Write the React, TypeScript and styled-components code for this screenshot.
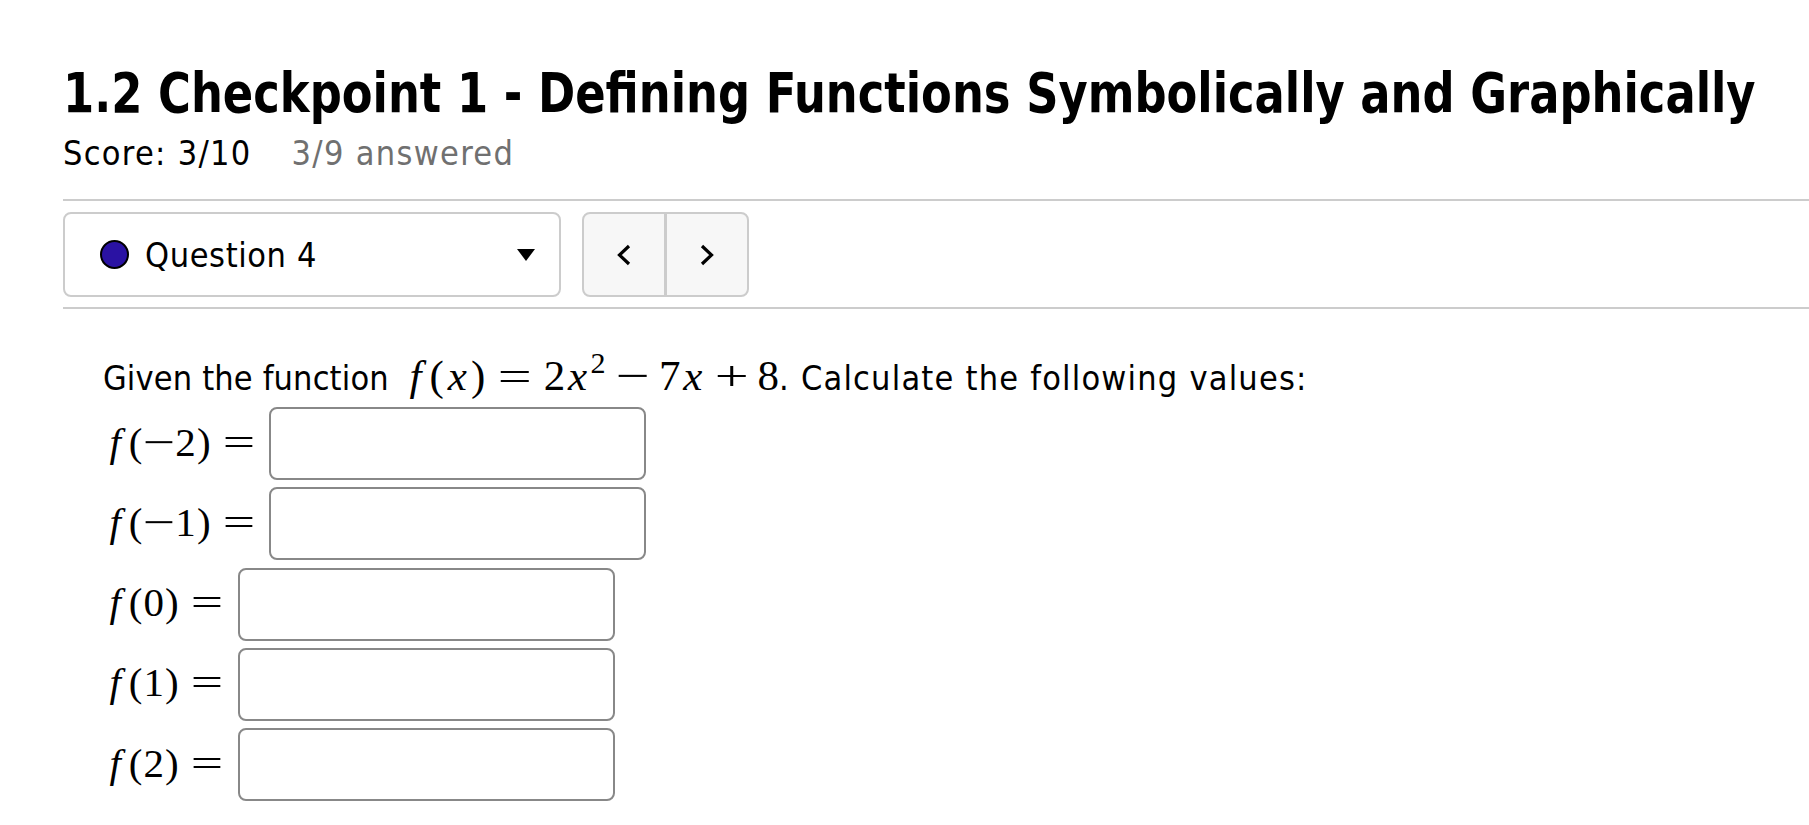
import styled, { createGlobalStyle } from "styled-components";

const GlobalStyle = createGlobalStyle`
  body {
    margin: 0;
    background: #fff;
    color: #000;
    font-family: "DejaVu Sans Condensed", "DejaVu Sans", sans-serif;
    font-stretch: condensed;
  }
`;

const Page = styled.div`
  padding: 61px 0 24px 63px;
  overflow: hidden;
`;

const Title = styled.h1`
  margin: 0;
  font-size: 56px;
  line-height: 64px;
  font-weight: 700;
  white-space: nowrap;
  transform: scaleX(0.89);
  transform-origin: left center;
`;

const ScoreLine = styled.div`
  margin-top: 8px;
  font-size: 34px;
  line-height: 40px;
  letter-spacing: 1.3px;
  white-space: nowrap;
`;

const Answered = styled.span`
  margin-left: 40px;
  color: #707070;
`;

const Divider = styled.hr<{ $top: number }>`
  margin: ${(p) => p.$top}px 0 0;
  height: 0;
  border: 0;
  border-top: 2px solid #ccc;
`;

const Toolbar = styled.div`
  display: flex;
  gap: 21px;
  margin-top: 11px;
  height: 85px;
`;

const QuestionSelect = styled.div`
  width: 498px;
  box-sizing: border-box;
  display: flex;
  align-items: center;
  padding: 0 24px 0 35px;
  border: 2px solid #ccc;
  border-radius: 8px;
  font-size: 34px;
  letter-spacing: 0.6px;
  cursor: pointer;
`;

const StatusDot = styled.span`
  width: 29px;
  height: 29px;
  flex: 0 0 29px;
  box-sizing: border-box;
  border-radius: 50%;
  border: 2.5px solid #000;
  background: #2a12a3;
`;

const QuestionLabel = styled.span`
  flex: 1;
  margin-left: 16px;
`;

const NavGroup = styled.div`
  width: 167px;
  box-sizing: border-box;
  display: flex;
  border: 2px solid #ccc;
  border-radius: 8px;
  background: #f7f7f7;
  overflow: hidden;
`;

const NavButton = styled.button`
  flex: 1;
  display: flex;
  align-items: center;
  justify-content: center;
  padding: 0;
  border: 0;
  background: transparent;
  cursor: pointer;
  & + & {
    border-left: 3px solid #ccc;
  }
`;

const Question = styled.div`
  margin-top: 45px;
  padding-left: 40px;
`;

const Prompt = styled.div`
  font-size: 34px;
  line-height: 48px;
  letter-spacing: 0.15px;
  white-space: nowrap;
`;

const PromptTail = styled.span`
  letter-spacing: 1.2px;
`;

const Answers = styled.div`
  display: flex;
  flex-direction: column;
  gap: 7.25px;
  margin-top: 5px;
`;

const AnswerRow = styled.div`
  display: flex;
  align-items: center;
`;

const AnswerBox = styled.input`
  width: 377px;
  height: 73px;
  box-sizing: border-box;
  margin: 0 0 0 3px;
  border: 2px solid #888;
  border-radius: 8px;
  background: #fff;
  font-size: 34px;
  outline: none;
`;

const MathRun = styled.span`
  margin-left: 4px;
  font-family: "Liberation Serif", "DejaVu Serif", serif;
  font-size: 43px;
  line-height: 1;
  letter-spacing: 0;
  font-stretch: normal;
  white-space: nowrap;
`;

const MathLabel = styled.span`
  display: block;
  font-family: "Liberation Serif", "DejaVu Serif", serif;
  font-size: 41px;
  line-height: 41px;
  font-stretch: normal;
  padding-bottom: 3px;
  white-space: nowrap;
`;

const Glyph = styled.span<{ $w: number; $italic?: boolean }>`
  display: inline-block;
  width: ${(p) => p.$w}em;
  text-align: center;
  font-style: ${(p) => (p.$italic ? "italic" : "normal")};
`;

const Wide = styled(Glyph)`
  transform: scaleX(1.4);
`;

const Op = styled(Wide)<{ $space: number }>`
  margin: 0 ${(p) => p.$space}em;
`;

const Sup = styled.span`
  display: inline-block;
  position: relative;
  top: -0.56em;
  width: 0.55em;
  font-size: 0.7em;
  line-height: 1;
  text-align: center;
`;

const F = () => <Glyph $w={0.598} $italic>f</Glyph>;
const X = () => <Glyph $w={0.572} $italic>x</Glyph>;
const Open = () => <Glyph $w={0.389}>(</Glyph>;
const Close = () => <Glyph $w={0.389}>)</Glyph>;
const Eq = () => <Op $w={0.778} $space={0.2778}>=</Op>;
const Bin = ({ ch }: { ch: string }) => <Op $w={0.778} $space={0.2222}>{ch}</Op>;
const Num = ({ n }: { n: string }) => (
  <>
    {n.split("").map((d, i) =>
      d === "−" ? <Wide key={i} $w={0.778}>−</Wide> : <Glyph key={i} $w={0.5}>{d}</Glyph>
    )}
  </>
);

const Chevron = ({ dir }: { dir: "left" | "right" }) => (
  <svg width="14" height="22" viewBox="0 0 14 22">
    <polyline
      points={dir === "left" ? "12,2 2.5,11 12,20" : "2,2 11.5,11 2,20"}
      fill="none"
      stroke="#000"
      strokeWidth="3.2"
    />
  </svg>
);

const Caret = () => (
  <svg width="18" height="12" viewBox="0 0 18 12">
    <polygon points="0,0 18,0 9,12" fill="#000" />
  </svg>
);

const inputs = ["−2", "−1", "0", "1", "2"];

const App = () => {
  return (
    <Page>
      <GlobalStyle />
      <Title>1.2 Checkpoint 1 - Defining Functions Symbolically and Graphically</Title>
      <ScoreLine>
        Score: 3/10<Answered>3/9 answered</Answered>
      </ScoreLine>
      <Divider $top={26} />
      <Toolbar>
        <QuestionSelect>
          <StatusDot />
          <QuestionLabel>Question 4</QuestionLabel>
          <Caret />
        </QuestionSelect>
        <NavGroup>
          <NavButton aria-label="Previous question">
            <Chevron dir="left" />
          </NavButton>
          <NavButton aria-label="Next question">
            <Chevron dir="right" />
          </NavButton>
        </NavGroup>
      </Toolbar>
      <Divider $top={10} />
      <Question>
        <Prompt>
          Given the function{" "}
          <MathRun>
            <F />
            <Open />
            <X />
            <Close />
            <Eq />
            <Num n="2" />
            <X />
            <Sup>2</Sup>
            <Bin ch="−" />
            <Num n="7" />
            <X />
            <Bin ch="+" />
            <Num n="8" />
          </MathRun>
          <PromptTail>. Calculate the following values:</PromptTail>
        </Prompt>
        <Answers>
          {inputs.map((v) => (
            <AnswerRow key={v}>
              <MathLabel>
                <F />
                <Open />
                <Num n={v} />
                <Close />
                <Eq />
              </MathLabel>
              <AnswerBox type="text" aria-label={`f(${v})`} />
            </AnswerRow>
          ))}
        </Answers>
      </Question>
    </Page>
  );
};

export default App;
